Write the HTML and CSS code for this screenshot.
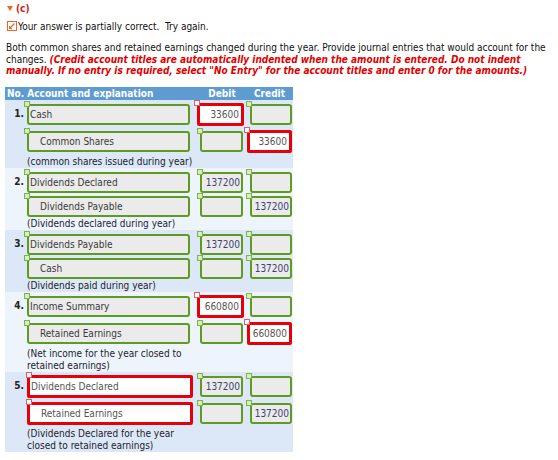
FILE: index.html
```html
<!DOCTYPE html>
<html>
<head>
<meta charset="utf-8">
<link rel="stylesheet" href="styles.css">
</head>
<body>
<div class="part"><span class="tri"></span><span class="label">(c)</span></div>
<div class="status">
  <svg class="chk" width="10" height="10" viewBox="0 0 10 10"><rect x="0.5" y="0.5" width="9" height="9" fill="#fff" stroke="#f0642a"/><path d="M2.5 7.5 L7.5 2.5" stroke="#f0642a" stroke-width="1.2"/><path d="M2.5 5 L2.5 7.5 L5 7.5" stroke="#f0642a" stroke-width="1" fill="none"/></svg>
  <span>Your answer is partially correct.&nbsp; Try again.</span>
</div>
<p class="q">Both common shares and retained earnings changed during the year. Provide journal entries that would account for the<br>changes. <em>(Credit account titles are automatically indented when the amount is entered. Do not indent<br>manually. If no entry is required, select "No Entry" for the account titles and enter 0 for the amounts.)</em></p>

<div class="je">
  <div class="head"><span class="h-acc">No. Account and explanation</span><span class="h-dr">Debit</span><span class="h-cr">Credit</span></div>

  <div class="entry odd">
    <div class="line tall">
      <span class="num">1.</span>
      <div class="cell acc"><i class="mk ok"></i><div class="inp">Cash</div></div>
      <div class="cell dr"><i class="mk bad"></i><div class="inp amt bad">33600</div></div>
      <div class="cell cr"><i class="mk ok"></i><div class="inp amt"></div></div>
    </div>
    <div class="line tall">
      <span class="num"></span>
      <div class="cell acc"><i class="mk ok"></i><div class="inp ind">Common Shares</div></div>
      <div class="cell dr"><i class="mk ok"></i><div class="inp amt"></div></div>
      <div class="cell cr"><i class="mk bad"></i><div class="inp amt bad">33600</div></div>
    </div>
    <div class="expl">(common shares issued during year)</div>
  </div>

  <div class="entry even">
    <div class="line">
      <span class="num">2.</span>
      <div class="cell acc"><i class="mk ok"></i><div class="inp">Dividends Declared</div></div>
      <div class="cell dr"><i class="mk ok"></i><div class="inp amt">137200</div></div>
      <div class="cell cr"><i class="mk ok"></i><div class="inp amt"></div></div>
    </div>
    <div class="line">
      <span class="num"></span>
      <div class="cell acc"><i class="mk ok"></i><div class="inp ind">Dividends Payable</div></div>
      <div class="cell dr"><i class="mk ok"></i><div class="inp amt"></div></div>
      <div class="cell cr"><i class="mk ok"></i><div class="inp amt">137200</div></div>
    </div>
    <div class="expl">(Dividends declared during year)</div>
  </div>

  <div class="entry odd">
    <div class="line">
      <span class="num">3.</span>
      <div class="cell acc"><i class="mk ok"></i><div class="inp">Dividends Payable</div></div>
      <div class="cell dr"><i class="mk ok"></i><div class="inp amt">137200</div></div>
      <div class="cell cr"><i class="mk ok"></i><div class="inp amt"></div></div>
    </div>
    <div class="line">
      <span class="num"></span>
      <div class="cell acc"><i class="mk ok"></i><div class="inp ind">Cash</div></div>
      <div class="cell dr"><i class="mk ok"></i><div class="inp amt"></div></div>
      <div class="cell cr"><i class="mk ok"></i><div class="inp amt">137200</div></div>
    </div>
    <div class="expl">(Dividends paid during year)</div>
  </div>

  <div class="entry even">
    <div class="line tall">
      <span class="num">4.</span>
      <div class="cell acc"><i class="mk ok"></i><div class="inp">Income Summary</div></div>
      <div class="cell dr"><i class="mk bad"></i><div class="inp amt bad">660800</div></div>
      <div class="cell cr"><i class="mk ok"></i><div class="inp amt"></div></div>
    </div>
    <div class="line tall">
      <span class="num"></span>
      <div class="cell acc"><i class="mk ok"></i><div class="inp ind">Retained Earnings</div></div>
      <div class="cell dr"><i class="mk ok"></i><div class="inp amt"></div></div>
      <div class="cell cr"><i class="mk bad"></i><div class="inp amt bad">660800</div></div>
    </div>
    <div class="expl">(Net income for the year closed to<br>retained earnings)</div>
  </div>

  <div class="entry odd">
    <div class="line tall">
      <span class="num">5.</span>
      <div class="cell acc"><i class="mk bad"></i><div class="inp bad">Dividends Declared</div></div>
      <div class="cell dr"><i class="mk ok"></i><div class="inp amt">137200</div></div>
      <div class="cell cr"><i class="mk ok"></i><div class="inp amt"></div></div>
    </div>
    <div class="line tall">
      <span class="num"></span>
      <div class="cell acc"><i class="mk bad"></i><div class="inp ind bad">Retained Earnings</div></div>
      <div class="cell dr"><i class="mk ok"></i><div class="inp amt"></div></div>
      <div class="cell cr"><i class="mk ok"></i><div class="inp amt">137200</div></div>
    </div>
    <div class="expl">(Dividends Declared for the year<br>closed to retained earnings)</div>
  </div>
</div>
</body>
</html>
```

FILE: styles.css
```css
body {
  margin: 0;
  font-family: "DejaVu Sans Condensed", "DejaVu Sans", sans-serif;
  font-size: 10px;
  color: #222;
  background: #fff;
}

.part {
  margin-top: 2px;
  height: 12px;
  display: flex;
  align-items: center;
  gap: 3px;
  padding-left: 7px;
}
.tri {
  width: 0;
  height: 0;
  border-left: 3px solid transparent;
  border-right: 3px solid transparent;
  border-top: 5px solid #f0642a;
}
.label {
  color: #cc1b1b;
  font-weight: bold;
}

.status {
  margin-top: 6px;
  height: 12px;
  display: flex;
  align-items: center;
  gap: 1px;
  padding-left: 7px;
  color: #111;
}
.chk { flex: none; }

.q {
  margin: 10px 0 0 6px;
  line-height: 11.5px;
  white-space: nowrap;
  color: #111;
}
.q em {
  color: #e00000;
  font-weight: bold;
  font-style: italic;
}

.je {
  margin: 10px 0 0 5px;
  width: 288px;
}
.head {
  display: flex;
  height: 13px;
  line-height: 13px;
  background: #5e9bd1;
  color: #fff;
  font-weight: bold;
}
.h-acc { width: 191px; padding-left: 2px; }
.h-dr { width: 48px; text-align: center; }
.h-cr { width: 47px; text-align: center; }

.entry { padding: 1px 0 0; }
.odd { background: #dce8f7; }
.even { background: #eef4fc; }

.line {
  display: flex;
  align-items: flex-start;
  height: 24px;
}
.line.tall { height: 27px; }

.num {
  width: 22px;
  flex: none;
  box-sizing: border-box;
  padding-right: 3px;
  padding-top: 7px;
  text-align: right;
  font-weight: bold;
  color: #222;
}

.cell {
  position: relative;
  display: flex;
  padding-top: 3px;
  flex: none;
}
.cell.acc { width: 166px; }
.cell.dr { width: 48px; margin-left: 3px; justify-content: flex-end; }
.cell.cr { width: 48px; justify-content: flex-end; }

.inp {
  box-sizing: border-box;
  height: 21px;
  line-height: 17px;
  border: 2px solid #5f9b22;
  border-radius: 3px;
  background: #ebebeb;
  padding-left: 1px;
  color: #3a3a3a;
  white-space: nowrap;
  overflow: hidden;
}
.acc .inp { width: 163px; }
.dr .inp { width: 43px; margin-right: 1px; }
.cr .inp { width: 42px; }
.inp.amt {
  text-align: right;
  padding: 0 1px 0 0;
  color: #3d4276;
}
.inp.ind { padding-left: 11px; }

.inp.bad {
  height: 23px;
  margin-top: -1px;
  line-height: 17px;
  border: 3px solid #e6000a;
  border-radius: 2px;
  background: #fff;
  color: #555;
}
.acc .inp.bad { width: 166px; }
.dr .inp.bad { width: 47px; margin-right: 0; }
.cr .inp.bad { width: 45px; }
.inp.amt.bad { padding-right: 2px; color: #555; }

.mk {
  position: absolute;
  top: 0;
  width: 4px;
  height: 4px;
  border: 1px solid #7fb34a;
  background: #d8ecc4;
  z-index: 1;
}
.acc .mk { left: -3px; }
.dr .mk { right: 41px; }
.cr .mk { right: 40px; }
.mk.bad {
  border-color: #e85a6a;
  background: #fff;
  top: -1px;
}
.acc .mk.bad { left: -1px; }
.dr .mk.bad { right: 44px; }
.cr .mk.bad { right: 42px; }

.expl {
  margin-left: 22px;
  padding: 1px 0 0;
  line-height: 12px;
  white-space: nowrap;
  color: #1c1c2c;
}
```
